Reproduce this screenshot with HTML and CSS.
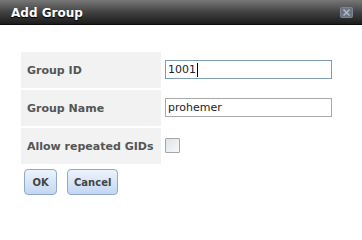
FILE: index.html
```html
<!DOCTYPE html>
<html>
<head>
<meta charset="utf-8">
<link rel="stylesheet" href="styles.css">
</head>
<body>
<div class="dialog">
  <div class="titlebar">
    <span class="title">Add Group</span>
    <span class="close" aria-label="close">
      <svg width="13" height="11" viewBox="0 0 13 11">
        <rect x="0.5" y="0.5" width="12" height="10" rx="1" fill="#6a7381" stroke="#7c8593"/>
        <path d="M3.5 2.5 L9.5 8.5 M9.5 2.5 L3.5 8.5" stroke="#b4bbc6" stroke-width="1.5"/>
      </svg>
    </span>
  </div>
  <div class="content">
    <table class="form">
      <tr>
        <th>Group ID</th>
        <td><span class="field-wrap"><input class="field focused" type="text" value="1001"><span class="caret"></span></span></td>
      </tr>
      <tr>
        <th>Group Name</th>
        <td><input class="field" type="text" value="prohemer"></td>
      </tr>
      <tr>
        <th>Allow repeated GIDs</th>
        <td><input class="check" type="checkbox"></td>
      </tr>
    </table>
    <div class="buttons">
      <button class="btn btn-ok">OK</button>
      <button class="btn">Cancel</button>
    </div>
  </div>
</div>
</body>
</html>
```
FILE: styles.css
```css
html, body {
  margin: 0;
  padding: 0;
  background: #fff;
}
body {
  font-family: "DejaVu Sans", Verdana, sans-serif;
  width: 362px;
  height: 213px;
  overflow: hidden;
}
.titlebar {
  height: 24px;
  border-bottom: 1px solid #0c0c0c;
  background: linear-gradient(#777, #424242 50%, #1c1c1c);
  display: flex;
  align-items: center;
  justify-content: space-between;
  padding: 0 9px 0 11px;
}
.title {
  color: #fff;
  font-weight: bold;
  font-size: 12px;
  text-shadow: 0 1px 1px #000;
  padding-top: 1px;
}
.close {
  display: flex;
}
.content {
  padding: 25px 0 0 21px;
}
.form {
  border-collapse: separate;
  border-spacing: 0 2px;
}
.form th {
  width: 134px;
  height: 36px;
  padding: 0 0 0 6px;
  background: #f2f2f2;
  color: #555;
  font-size: 11px;
  font-weight: bold;
  text-align: left;
  white-space: nowrap;
  vertical-align: middle;
}
.form td {
  padding: 0 0 0 4px;
  vertical-align: middle;
}
.field-wrap {
  position: relative;
  display: block;
}
.caret {
  position: absolute;
  left: 32px;
  top: 3px;
  width: 1px;
  height: 14px;
  background: #000;
}
.field {
  display: block;
  box-sizing: border-box;
  width: 167px;
  height: 19px;
  margin: 0 0 1px 0;
  padding: 0 2px;
  border: 1px solid #a9a9a9;
  font-family: "DejaVu Sans", Verdana, sans-serif;
  font-size: 11px;
  color: #222;
  background: #fff;
  outline: none;
}
.field.focused {
  border-color: #7f9db9;
}
.check {
  appearance: none;
  -webkit-appearance: none;
  display: block;
  box-sizing: border-box;
  width: 15px;
  height: 15px;
  margin: 0 0 1px 0;
  border: 1px solid #a6a6a6;
  border-radius: 1px;
  background: linear-gradient(135deg, #dde3ea, #f7f9fb);
}
.buttons {
  display: flex;
  gap: 10px;
  padding: 3px 0 0 3px;
}
.btn {
  box-sizing: border-box;
  height: 26px;
  min-width: 33px;
  padding: 0 6px;
  border: 1px solid #93a8c8;
  border-radius: 4px;
  background: linear-gradient(#edf3fc, #d6e4f7 55%, #c3d6f3);
  color: #444;
  font-family: "DejaVu Sans", Verdana, sans-serif;
  font-size: 10px;
  font-weight: bold;
  cursor: pointer;
}
```
